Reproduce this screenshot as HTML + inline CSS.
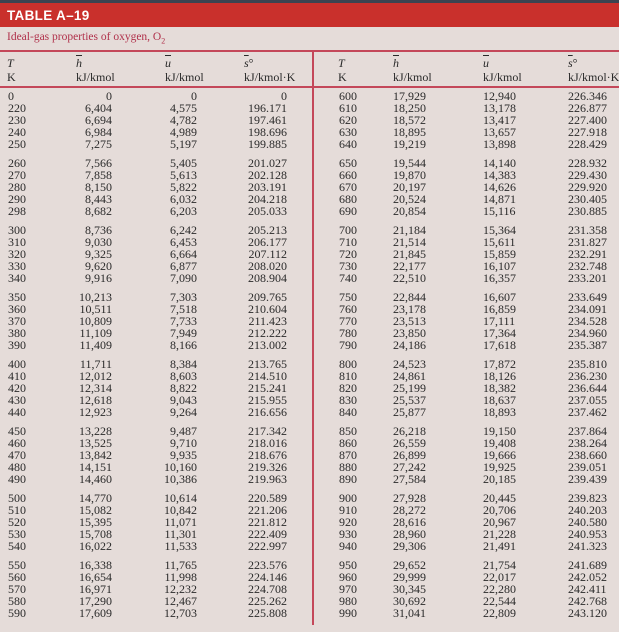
<!DOCTYPE html>
<html><head><meta charset="utf-8"><style>
body{margin:0;width:619px;height:635px;background:#fff;position:relative;overflow:hidden;font-family:"Liberation Serif",serif;color:#2a2a2a}
.bg{position:absolute;left:0;top:0;width:619px;height:632px;background:#e5dcd9}
.top{position:absolute;left:0;top:0;width:619px;height:3px;background:#3c4350}
.red{position:absolute;left:0;top:3px;width:619px;height:24px;background:#c9302c;color:#fff;font-family:"Liberation Sans",sans-serif;font-weight:bold;font-size:13.5px;line-height:25px;padding-left:7px;box-sizing:border-box;letter-spacing:0.3px}
.cap{position:absolute;left:7px;top:31px;font-size:11.5px;color:#b0304a}
.hl{position:absolute;left:0;width:619px;height:1.5px;background:#c4485a}
.vl{position:absolute;left:312px;top:50px;width:1.5px;height:575px;background:#c4485a}
.c{position:absolute;top:90px;font-size:12px;line-height:12px}
.c div{margin-bottom:7px}
.r{text-align:right}
.h{position:absolute;font-size:12px;line-height:14px}
.i{font-style:italic}
.ob{text-decoration:overline}
</style></head><body>
<div class="bg"></div><div class="top"></div>
<div class="red">TABLE A–19</div>
<div class="cap">Ideal-gas properties of oxygen, O<sub style="font-size:8px">2</sub></div>
<div class="hl" style="top:50px"></div>
<div class="hl" style="top:86px"></div>
<div class="vl"></div>

<div class="h" style="left:7px;top:56px"><span class="i">T</span><br>K</div>
<div class="h" style="left:76px;top:56px"><span class="i ob">h</span><br>kJ/kmol</div>
<div class="h" style="left:165px;top:56px"><span class="i ob">u</span><br>kJ/kmol</div>
<div class="h" style="left:244px;top:56px"><span class="i ob">s</span>°<br>kJ/kmol·K</div>
<div class="h" style="left:338px;top:56px"><span class="i">T</span><br>K</div>
<div class="h" style="left:393px;top:56px"><span class="i ob">h</span><br>kJ/kmol</div>
<div class="h" style="left:483px;top:56px"><span class="i ob">u</span><br>kJ/kmol</div>
<div class="h" style="left:568px;top:56px"><span class="i ob">s</span>°<br>kJ/kmol·K</div>

<div class="c" style="left:8px">
<div>0<br>220<br>230<br>240<br>250</div><div>260<br>270<br>280<br>290<br>298</div><div>300<br>310<br>320<br>330<br>340</div><div>350<br>360<br>370<br>380<br>390</div><div>400<br>410<br>420<br>430<br>440</div><div>450<br>460<br>470<br>480<br>490</div><div>500<br>510<br>520<br>530<br>540</div><div>550<br>560<br>570<br>580<br>590</div>
</div>
<div class="c r" style="right:507px">
<div>0<br>6,404<br>6,694<br>6,984<br>7,275</div><div>7,566<br>7,858<br>8,150<br>8,443<br>8,682</div><div>8,736<br>9,030<br>9,325<br>9,620<br>9,916</div><div>10,213<br>10,511<br>10,809<br>11,109<br>11,409</div><div>11,711<br>12,012<br>12,314<br>12,618<br>12,923</div><div>13,228<br>13,525<br>13,842<br>14,151<br>14,460</div><div>14,770<br>15,082<br>15,395<br>15,708<br>16,022</div><div>16,338<br>16,654<br>16,971<br>17,290<br>17,609</div>
</div>
<div class="c r" style="right:422px">
<div>0<br>4,575<br>4,782<br>4,989<br>5,197</div><div>5,405<br>5,613<br>5,822<br>6,032<br>6,203</div><div>6,242<br>6,453<br>6,664<br>6,877<br>7,090</div><div>7,303<br>7,518<br>7,733<br>7,949<br>8,166</div><div>8,384<br>8,603<br>8,822<br>9,043<br>9,264</div><div>9,487<br>9,710<br>9,935<br>10,160<br>10,386</div><div>10,614<br>10,842<br>11,071<br>11,301<br>11,533</div><div>11,765<br>11,998<br>12,232<br>12,467<br>12,703</div>
</div>
<div class="c r" style="right:332px">
<div>0<br>196.171<br>197.461<br>198.696<br>199.885</div><div>201.027<br>202.128<br>203.191<br>204.218<br>205.033</div><div>205.213<br>206.177<br>207.112<br>208.020<br>208.904</div><div>209.765<br>210.604<br>211.423<br>212.222<br>213.002</div><div>213.765<br>214.510<br>215.241<br>215.955<br>216.656</div><div>217.342<br>218.016<br>218.676<br>219.326<br>219.963</div><div>220.589<br>221.206<br>221.812<br>222.409<br>222.997</div><div>223.576<br>224.146<br>224.708<br>225.262<br>225.808</div>
</div>

<div class="c" style="left:339px">
<div>600<br>610<br>620<br>630<br>640</div><div>650<br>660<br>670<br>680<br>690</div><div>700<br>710<br>720<br>730<br>740</div><div>750<br>760<br>770<br>780<br>790</div><div>800<br>810<br>820<br>830<br>840</div><div>850<br>860<br>870<br>880<br>890</div><div>900<br>910<br>920<br>930<br>940</div><div>950<br>960<br>970<br>980<br>990</div>
</div>
<div class="c" style="left:393px">
<div>17,929<br>18,250<br>18,572<br>18,895<br>19,219</div><div>19,544<br>19,870<br>20,197<br>20,524<br>20,854</div><div>21,184<br>21,514<br>21,845<br>22,177<br>22,510</div><div>22,844<br>23,178<br>23,513<br>23,850<br>24,186</div><div>24,523<br>24,861<br>25,199<br>25,537<br>25,877</div><div>26,218<br>26,559<br>26,899<br>27,242<br>27,584</div><div>27,928<br>28,272<br>28,616<br>28,960<br>29,306</div><div>29,652<br>29,999<br>30,345<br>30,692<br>31,041</div>
</div>
<div class="c" style="left:483px">
<div>12,940<br>13,178<br>13,417<br>13,657<br>13,898</div><div>14,140<br>14,383<br>14,626<br>14,871<br>15,116</div><div>15,364<br>15,611<br>15,859<br>16,107<br>16,357</div><div>16,607<br>16,859<br>17,111<br>17,364<br>17,618</div><div>17,872<br>18,126<br>18,382<br>18,637<br>18,893</div><div>19,150<br>19,408<br>19,666<br>19,925<br>20,185</div><div>20,445<br>20,706<br>20,967<br>21,228<br>21,491</div><div>21,754<br>22,017<br>22,280<br>22,544<br>22,809</div>
</div>
<div class="c" style="left:568px">
<div>226.346<br>226.877<br>227.400<br>227.918<br>228.429</div><div>228.932<br>229.430<br>229.920<br>230.405<br>230.885</div><div>231.358<br>231.827<br>232.291<br>232.748<br>233.201</div><div>233.649<br>234.091<br>234.528<br>234.960<br>235.387</div><div>235.810<br>236.230<br>236.644<br>237.055<br>237.462</div><div>237.864<br>238.264<br>238.660<br>239.051<br>239.439</div><div>239.823<br>240.203<br>240.580<br>240.953<br>241.323</div><div>241.689<br>242.052<br>242.411<br>242.768<br>243.120</div>
</div>
</body></html>
